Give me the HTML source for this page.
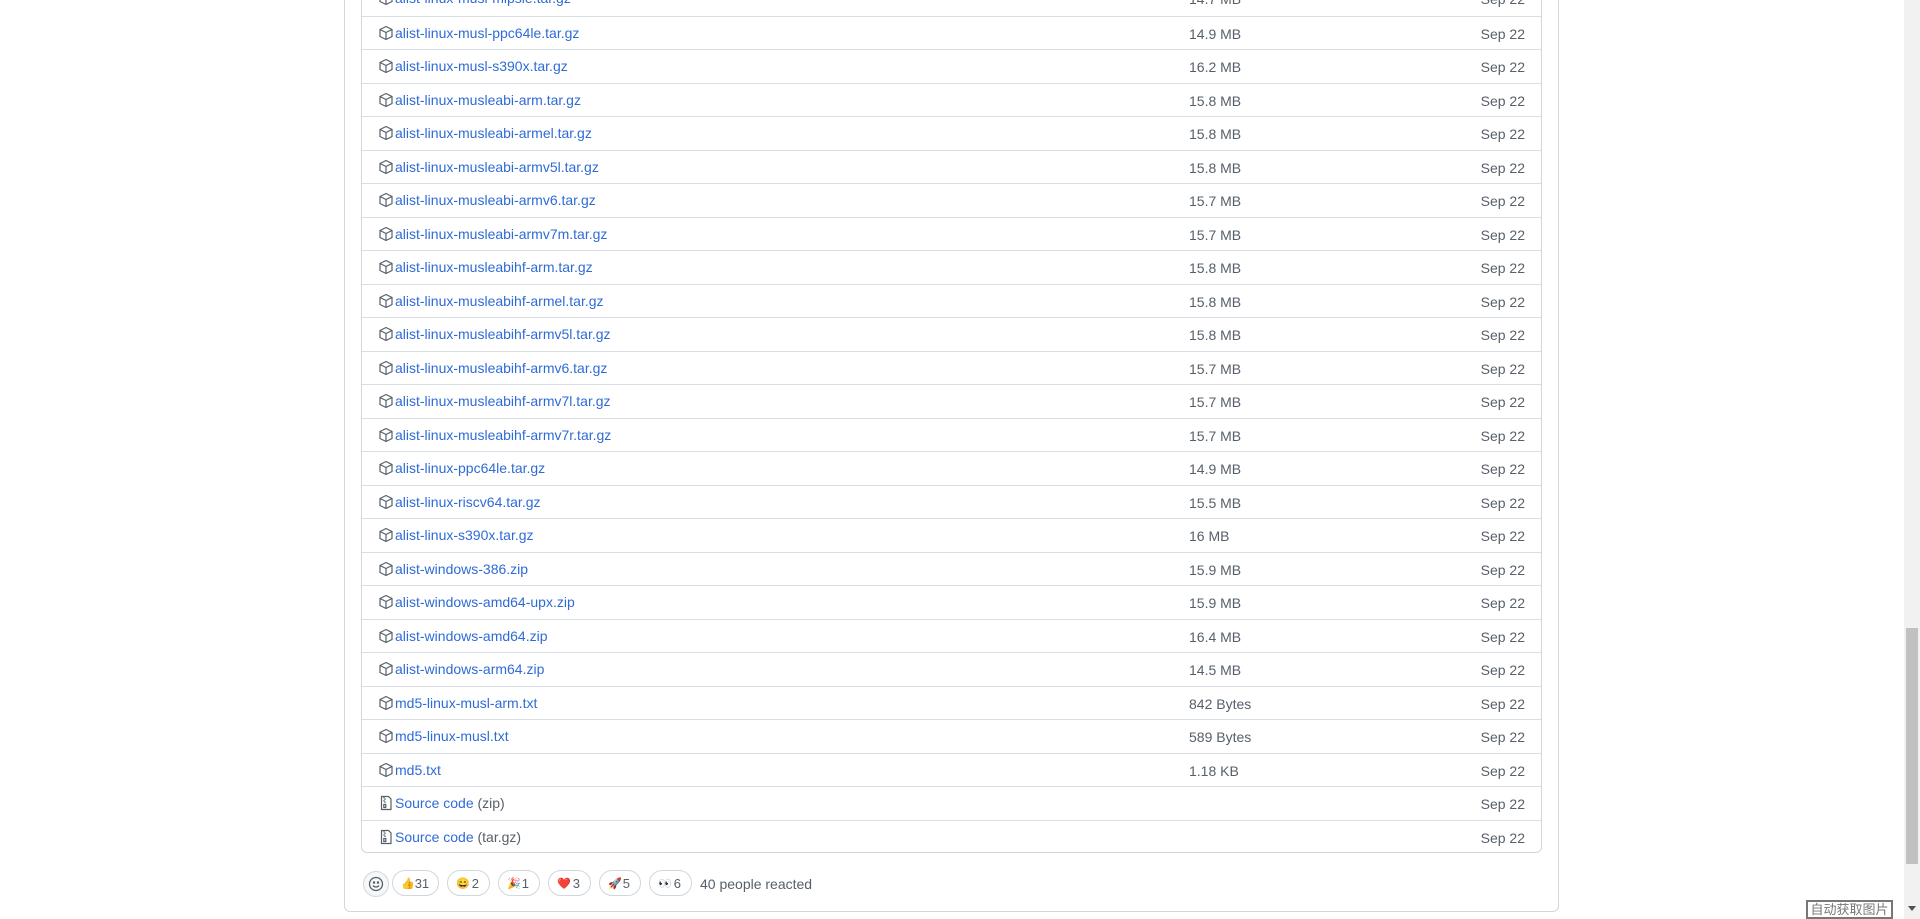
<!DOCTYPE html>
<html><head><meta charset="utf-8"><style>
*{box-sizing:border-box;margin:0;padding:0}
body{width:1920px;height:919px;overflow:hidden;background:#fff;font-family:"Liberation Sans","Noto Sans CJK SC",sans-serif;font-size:14px;position:relative}
.outer{position:absolute;left:344px;top:-20px;width:1215px;height:932px;border:1px solid #d0d7de;border-radius:6px}
.tbl{position:absolute;left:361px;top:-20px;width:1181px;height:873px;border:1px solid #d0d7de;border-radius:0 0 6px 6px;overflow:hidden}
.row{position:absolute;left:0;width:100%;height:33.5px;border-top:1px solid #d8dee4}
.row .n{position:absolute;left:16px;top:8px;color:#2f6bd6;display:flex;align-items:center}
.row .n svg{margin-right:1px}
.row .s{position:absolute;left:827px;top:9px;color:#57606a}
.row .d{position:absolute;right:16px;top:9px;color:#57606a}
.pill{position:absolute;top:870px;height:26px;border:1px solid #d0d7de;border-radius:13px;font-size:13px;color:#57606a;display:flex;align-items:center;justify-content:space-between;padding:0 10px 0 8px}
.pill i{font-style:normal;font-size:11px}
.sb{position:absolute;right:0;top:0;width:16px;height:919px;background:#f1f1f1}
.th{position:absolute;right:2px;width:12px;top:628px;height:236px;background:#c1c1c1}
</style></head><body>
<div class="outer"></div>
<div class="tbl" id="t"></div>
<div style="position:absolute;left:363px;top:871px;width:26px;height:26px;border:1px solid #d0d7de;border-radius:50%;background:#f6f8fa;display:flex;align-items:center;justify-content:center">
<svg width="16" height="16" viewBox="0 0 16 16" fill="none" stroke="#57606a" stroke-width="1.3"><circle cx="8" cy="8" r="6.5"/><path d="M5 9.5c1.5 2 4.5 2 6 0"/><circle cx="6" cy="6.5" r=".6" fill="#57606a"/><circle cx="10" cy="6.5" r=".6" fill="#57606a"/></svg></div>
<div class="pill" style="left:392px;width:47px"><i>👍</i><span>31</span></div>
<div class="pill" style="left:447px;width:43px"><i>😄</i><span>2</span></div>
<div class="pill" style="left:498px;width:42px"><i>🎉</i><span>1</span></div>
<div class="pill" style="left:548px;width:43px"><i>❤️</i><span>3</span></div>
<div class="pill" style="left:599px;width:42px"><i>🚀</i><span>5</span></div>
<div class="pill" style="left:649px;width:43px"><i>👀</i><span>6</span></div>
<div style="position:absolute;left:700px;top:876px;font-size:14px;color:#57606a">40 people reacted</div>
<div class="sb"><div class="th"></div><div style="position:absolute;bottom:4px;left:4px;border:4px solid transparent;border-top:5px solid #505050"></div></div>
<div style="position:absolute;left:1806px;top:900px;width:87px;height:19px;border:2px solid #777;background:#fff;font-size:13px;color:#777;text-align:center;line-height:15px">自动获取图片</div>
<script>
var rows=[["alist-linux-musl-mipsle.tar.gz","14.7 MB"],["alist-linux-musl-ppc64le.tar.gz","14.9 MB"],["alist-linux-musl-s390x.tar.gz","16.2 MB"],["alist-linux-musleabi-arm.tar.gz","15.8 MB"],["alist-linux-musleabi-armel.tar.gz","15.8 MB"],["alist-linux-musleabi-armv5l.tar.gz","15.8 MB"],["alist-linux-musleabi-armv6.tar.gz","15.7 MB"],["alist-linux-musleabi-armv7m.tar.gz","15.7 MB"],["alist-linux-musleabihf-arm.tar.gz","15.8 MB"],["alist-linux-musleabihf-armel.tar.gz","15.8 MB"],["alist-linux-musleabihf-armv5l.tar.gz","15.8 MB"],["alist-linux-musleabihf-armv6.tar.gz","15.7 MB"],["alist-linux-musleabihf-armv7l.tar.gz","15.7 MB"],["alist-linux-musleabihf-armv7r.tar.gz","15.7 MB"],["alist-linux-ppc64le.tar.gz","14.9 MB"],["alist-linux-riscv64.tar.gz","15.5 MB"],["alist-linux-s390x.tar.gz","16 MB"],["alist-windows-386.zip","15.9 MB"],["alist-windows-amd64-upx.zip","15.9 MB"],["alist-windows-amd64.zip","16.4 MB"],["alist-windows-arm64.zip","14.5 MB"],["md5-linux-musl-arm.txt","842 Bytes"],["md5-linux-musl.txt","589 Bytes"],["md5.txt","1.18 KB"],["Source code&nbsp;<span style='color:#57606a'>(zip)</span>","",1],["Source code&nbsp;<span style='color:#57606a'>(tar.gz)</span>","",1]];
var pkg='<svg width="16" height="16" viewBox="0 0 16 16" fill="none" stroke="#57606a" stroke-width="1.2"><path d="M8 1.5l6 3v7l-6 3-6-3v-7z"/><path d="M2 4.5l6 3 6-3M8 7.5v7"/></svg>';
var zip='<svg width="16" height="16" viewBox="0 0 16 16" fill="none" stroke="#57606a" stroke-width="1.2"><path d="M3.5 1.5h7l2.5 2.5v10.5h-9.5z"/><path d="M6 2v1.5M7 3.5v1.5M6 5v1.5M7 6.5v1.5"/><rect x="5.8" y="9.5" width="2" height="3"/></svg>';
var h='';
rows.forEach(function(r,i){var top=1.2+33.5*i;
h+='<div class="row" style="top:'+top+'px;'+(i==0?'border-top:none':'')+'"><div class="n">'+(r[2]?zip:pkg)+r[0]+'</div><div class="s">'+r[1]+'</div><div class="d">Sep 22</div></div>';});
document.getElementById('t').innerHTML=h;
</script>
</body></html>
